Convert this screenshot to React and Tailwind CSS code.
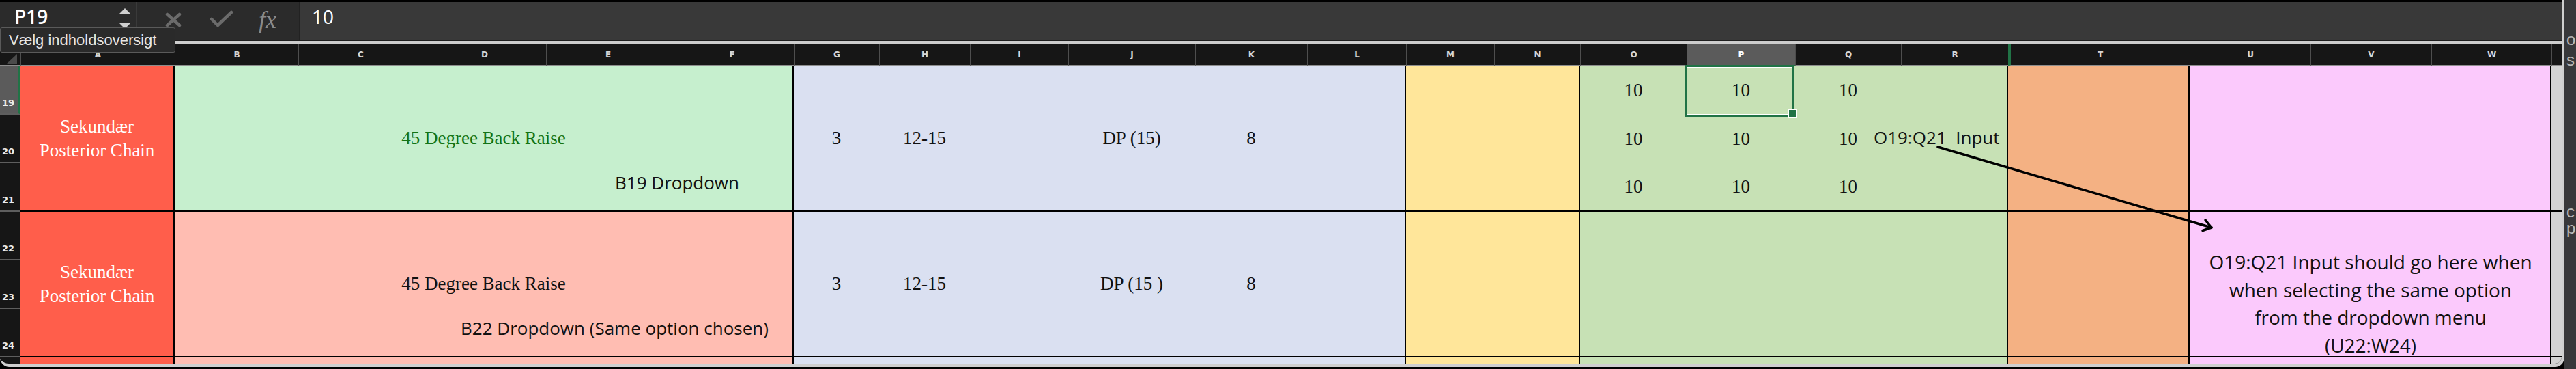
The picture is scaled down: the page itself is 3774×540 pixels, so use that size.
import React from "react";

const COLS =
  "grid grid-cols-[30px_226px_181px_182px_181px_181px_182px_125px_133px_144px_186px_164px_145px_129px_126px_156px_159px_155px_157px_266px_177px_177px_176px_15px]";

const SERIF = "font-['Liberation_Serif',serif] text-[27px] leading-[35px]";
const SANS = "font-['Open_Sans',sans-serif]";

const LETTERS = ["A", "B", "C", "D", "E", "F", "G", "H", "I", "J", "K", "L", "M", "N", "O", "P", "Q", "R", "T", "U", "V", "W", ""];

function HeaderRow() {
  return (
    <div className={COLS + " h-[32px] bg-[#161616]"}>
      <div className="relative border-b-2 border-b-[#8d8d8d]">
        <svg className="absolute left-[10px] bottom-[2px]" width="15" height="14" viewBox="0 0 15 14">
          <polygon points="15,0 15,14 0,14" fill="#4b4b4b" />
        </svg>
      </div>
      {LETTERS.map((l, i) => {
        let cls =
          "flex items-center justify-center border-l border-l-[#4e4e4e] border-b-2 border-b-[#8d8d8d] font-['DejaVu_Sans',sans-serif] font-bold text-[12px] text-[#d6d6d6]";
        if (l === "P") cls += " bg-[#5b5b5b] text-white border-b-[#217346]";
        if (l === "T") cls += " border-l-4 border-l-[#217346]";
        return (
          <div key={i} className={cls}>
            {l}
          </div>
        );
      })}
    </div>
  );
}

function RowHeads({ nums, highlight }) {
  return (
    <div className="flex flex-col bg-[#161616]">
      {nums.map((n, i) => (
        <div
          key={n}
          className={
            "h-[71px] flex items-end pl-[3px] pb-[6px] border-b-2 border-b-[#5e5e5e] font-['DejaVu_Sans',sans-serif] font-bold text-[13px] text-[#ececec] " +
            (highlight && i === 0 ? "bg-[#5b5b5b] border-r-[3px] border-r-[#217346]" : "")
          }
        >
          {n}
        </div>
      ))}
    </div>
  );
}

function Tens() {
  return (
    <div className="flex flex-col bg-[#c7e1b5] border-b-2 border-black">
      <div className={"h-[71px] flex items-center justify-center text-[#111] " + SERIF}>10</div>
      <div className={"h-[71px] flex items-center justify-center text-[#111] " + SERIF}>10</div>
      <div className={"h-[69px] flex items-center justify-center text-[#111] " + SERIF}>10</div>
    </div>
  );
}

function Lav({ children, last }) {
  return (
    <div
      className={
        "bg-[#dae0f1] border-b-2 border-black flex items-center justify-center text-[#111] " +
        SERIF +
        (last ? " border-r-2" : "")
      }
    >
      {children}
    </div>
  );
}

function Block({ nums, highlight, bfBg, bfText, bfColor, dp, h, tens }) {
  return (
    <div className={COLS + " h-[213px]"}>
      <RowHeads nums={nums} highlight={highlight} />
      <div className={"bg-[#ff5e4b] border-b-2 border-r-2 border-black flex items-center justify-center text-center text-white " + SERIF}>
        <span>
          Sekundær
          <br />
          Posterior Chain
        </span>
      </div>
      <div className={"col-span-5 border-b-2 border-r-2 border-black flex items-center justify-center " + bfBg + " " + bfColor + " " + SERIF}>
        {bfText}
      </div>
      <Lav>3</Lav>
      <Lav>{h}</Lav>
      <Lav />
      <Lav>{dp}</Lav>
      <Lav>8</Lav>
      <Lav last />
      <div className="col-span-2 bg-[#ffe69a] border-b-2 border-r-2 border-black" />
      {tens ? (
        <>
          <Tens />
          <Tens />
          <Tens />
          <div className="bg-[#c7e1b5] border-b-2 border-r-2 border-black" />
        </>
      ) : (
        <div className="col-span-4 bg-[#c7e1b5] border-b-2 border-r-2 border-black" />
      )}
      <div className="bg-[#f4b183] border-b-2 border-r-2 border-black" />
      <div className="col-span-3 bg-[#fbc9fc] border-b-2 border-r-2 border-black" />
      <div className="bg-[#d3d3d3] border-b-2 border-black" />
    </div>
  );
}

function Sliver() {
  return (
    <div className={COLS + " h-[9px]"}>
      <div className="bg-[#161616]" />
      <div className="bg-[#ff5e4b] border-r-2 border-black" />
      <div className="col-span-5 bg-[#ffbdb2] border-r-2 border-black" />
      <div className="col-span-6 bg-[#dae0f1] border-r-2 border-black" />
      <div className="col-span-2 bg-[#ffe69a] border-r-2 border-black" />
      <div className="col-span-4 bg-[#c7e1b5] border-r-2 border-black" />
      <div className="bg-[#f4b183] border-r-2 border-black" />
      <div className="col-span-3 bg-[#fbc9fc] border-r-2 border-black" />
      <div className="bg-[#d3d3d3]" />
    </div>
  );
}

function FormulaBar() {
  return (
    <div className="h-[55px] flex bg-[#2b2b2b]">
      <div className="w-[200px] relative flex items-start border-r border-r-[#3a3a3a]">
        <span className={"pl-[21px] pt-[7px] text-[28px] leading-[28px] font-semibold text-white " + SANS}>P19</span>
        <svg className="absolute left-[174px] top-[7px]" width="18" height="34" viewBox="0 0 18 34">
          <polygon points="9,2 18,11 0,11" fill="#d0d0d0" />
          <polygon points="0,23 18,23 9,32" fill="#d0d0d0" />
        </svg>
      </div>
      <div className="w-[238px] flex items-center pl-[42px]">
        <svg width="24" height="22" viewBox="0 0 24 22" className="-mt-[3px]">
          <path d="M3 3 L21 19 M21 3 L3 19" stroke="#6b6b6b" strokeWidth="4.5" strokeLinecap="round" />
        </svg>
        <svg width="35" height="26" viewBox="0 0 35 26" className="ml-[41px] -mt-[5px]">
          <path d="M3 13 L12 22 L32 3" stroke="#6b6b6b" strokeWidth="4.5" fill="none" strokeLinecap="round" strokeLinejoin="round" />
        </svg>
        <span className="ml-[37px] -mt-[3px] font-['Liberation_Serif',serif] italic text-[36px] leading-none text-[#8a8a8a]">fx</span>
      </div>
      <div className={"flex-1 bg-[#393939] border-l border-l-[#222] flex items-start pl-[18px] pt-[7px] text-[28px] leading-[28px] text-white " + SANS}>
        10
      </div>
    </div>
  );
}

export default function App() {
  return (
    <div className="w-[3774px] h-[540px] bg-black flex overflow-hidden">
      <div className="w-[3757px] h-[537px] shrink-0 relative flex flex-col pt-[3px] bg-black border-r-4 border-b-[5px] border-[#cfcfcf] rounded-b-[14px] overflow-hidden">
        <FormulaBar />
        <div className="h-[7px] flex flex-col">
          <div className="h-[2px] bg-[#1f1f1f]" />
          <div className="h-[4px] bg-[#cdcdcd]" />
          <div className="h-[1px] bg-[#1f1f1f]" />
        </div>
        <HeaderRow />
        <div className="relative">
          <Block
            nums={[19, 20, 21]}
            highlight
            bfBg="bg-[#c6efce]"
            bfColor="text-[#137313]"
            bfText="45 Degree Back Raise"
            dp="DP (15)"
            h="12-15"
            tens
          />
          <Block
            nums={[22, 23, 24]}
            bfBg="bg-[#ffbdb2]"
            bfColor="text-[#111]"
            bfText="45 Degree Back Raise"
            dp="DP (15 )"
            h="12-15"
          />
          <Sliver />

          {/* floating text boxes */}
          <div className={"absolute left-[901px] top-[155px] text-[26px] leading-[30px] text-[#111] whitespace-nowrap " + SANS}>
            B19 Dropdown
          </div>
          <div className={"absolute left-[675px] top-[368px] text-[26px] leading-[30px] text-[#111] whitespace-nowrap " + SANS}>
            B22 Dropdown (Same option chosen)
          </div>
          <div className={"absolute left-[2745px] top-[89px] text-[26px] leading-[30px] text-[#111] whitespace-pre " + SANS}>
            {"O19:Q21  Input"}
          </div>
          <div className={"absolute left-[3208px] top-[266px] w-[530px] text-center text-[28px] leading-[40.5px] text-[#111] " + SANS}>
            O19:Q21 Input should go here when
            <br />
            when selecting the same option
            <br />
            from the dropdown menu
            <br />
            (U22:W24)
          </div>

          {/* arrow */}
          <svg className="absolute left-[2830px] top-[105px]" width="420" height="145" viewBox="0 0 420 145">
            <path d="M9 13 L410 131" stroke="#000" strokeWidth="3.5" strokeLinecap="round" />
            <path d="M401 120 L410 131 L397 135.5" stroke="#000" strokeWidth="3.5" fill="none" strokeLinecap="round" strokeLinejoin="round" />
          </svg>

          {/* selection P19 */}
          <div className="absolute left-[2468px] top-[-2px] w-[161px] h-[76px] border-[3px] border-[#217346]">
            <div className="w-full h-full border border-white" />
          </div>
          <div className="absolute left-[2620px] top-[63px] w-[12px] h-[12px] bg-[#217346] border border-white" />
        </div>

        {/* tooltip */}
        <div className="absolute left-0 top-[40px] w-[257px] h-[37px] bg-[#2a2a2a] border border-[#5a5a5a] rounded-[3px] flex items-center pl-[12px] font-['Liberation_Sans',sans-serif] text-[22px] text-[#e5e5e5]">
          Vælg indholdsoversigt
        </div>
      </div>
      <div className="w-[17px] h-[540px] bg-[#38383a] relative overflow-hidden font-['Liberation_Sans',sans-serif] text-[24px] text-[#b8b8b8] leading-none">
        <span className="absolute left-[3px] top-[46px]">o</span>
        <span className="absolute left-[3px] top-[76px]">s</span>
        <span className="absolute left-[3px] top-[298px]">c</span>
        <span className="absolute left-[3px] top-[322px]">p</span>
      </div>
    </div>
  );
}
